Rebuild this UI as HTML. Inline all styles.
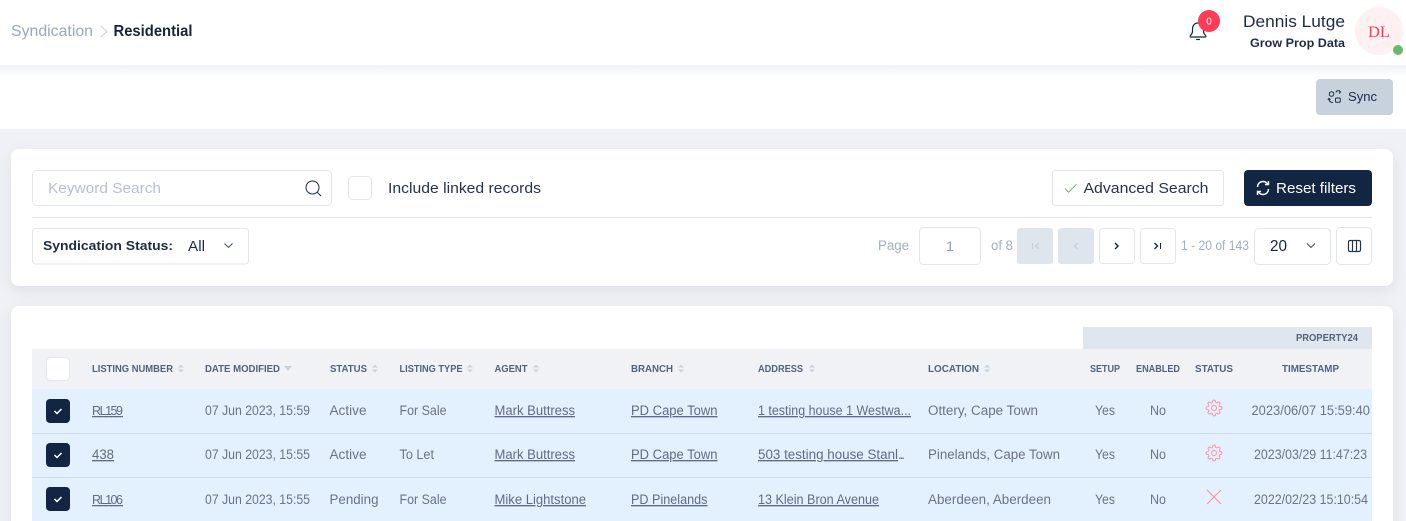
<!DOCTYPE html>
<html lang="en">
<head>
<meta charset="utf-8">
<title>Syndication - Residential</title>
<style>
html,body{margin:0;padding:0;background:#eff1f6;width:1406px;height:521px;overflow:hidden}
svg{display:block}
text{font-family:"Liberation Sans",sans-serif;white-space:pre}
.h{font-size:10.5px;font-weight:700;fill:#52637d}
.r{font-size:13.5px;fill:#6c7389}
.l{font-size:13.5px;fill:#636a87;text-decoration:underline}
.m{font-size:13.5px;fill:#9fb0c8}
.b{fill:#fff;stroke:#e2e7ee;stroke-width:1}
.s{fill:#c9d1db}
</style>
</head>
<body>
<svg width="1406" height="521" viewBox="0 0 1406 521" xmlns="http://www.w3.org/2000/svg">
<defs>
<linearGradient id="hs" x1="0" y1="0" x2="0" y2="1"><stop offset="0" stop-color="#f1f3f7"/><stop offset="1" stop-color="#ffffff"/></linearGradient>
<filter id="cs" x="-5%" y="-20%" width="110%" height="150%"><feDropShadow dx="0" dy="5" stdDeviation="7" flood-color="#12263f" flood-opacity=".07"/></filter>
</defs>

<rect width="1406" height="521" fill="#eff1f6"/>
<rect width="1406" height="129" fill="#fff"/>
<rect y="65" width="1406" height="13" fill="url(#hs)"/>

<!-- breadcrumb -->
<text x="11" y="36" font-size="15.500" fill="#95a9c5" textLength="82" lengthAdjust="spacingAndGlyphs">Syndication</text>
<path d="M100.500 26l6.500 5.500-6.500 5.500" fill="none" stroke="#c9d1db" stroke-width="1.100"/>
<text x="113.500" y="36" font-size="15.500" font-weight="700" fill="#12263f" textLength="79" lengthAdjust="spacingAndGlyphs">Residential</text>

<!-- bell -->
<g fill="none" stroke="#12263f" stroke-width="1.200">
<path d="M1198 23c-3.600 0-5.500 2.700-5.500 6v2.500c0 2-1.200 3-2.200 4.200-.4.600-.1 1.300.6 1.300h14.200c.7 0 1-.7.600-1.300-1-1.200-2.200-2.200-2.200-4.200V29c0-3.300-1.900-6-5.500-6z"/>
<path d="M1196 39.500h4"/>
</g>
<circle cx="1209" cy="21" r="11" fill="#ff3b57"/>
<text x="1209" y="24.500" font-size="10" fill="#fff" text-anchor="middle">0</text>

<text x="1243" y="27" font-size="16.500" fill="#1b2c48" textLength="102" lengthAdjust="spacingAndGlyphs">Dennis Lutge</text>
<text x="1250" y="47" font-size="11.500" font-weight="700" fill="#1b2c48" textLength="95" lengthAdjust="spacingAndGlyphs">Grow Prop Data</text>
<circle cx="1379" cy="31" r="24" fill="#fff0f1"/>
<text x="1368" y="37" font-size="16" fill="#ff3b57" style="font-family:'Liberation Serif',serif" textLength="22" lengthAdjust="spacingAndGlyphs">DL</text>
<circle cx="1398" cy="50" r="5" fill="#66bb6a"/>

<!-- sync -->
<rect x="1316" y="79" width="77" height="36" rx="4" fill="#c8d2dd"/>
<g fill="none" stroke="#1b2c48" stroke-width="1">
<circle cx="1331.500" cy="94" r="2.300"/>
<rect x="1335.500" y="98" width="4.800" height="4.300" rx="1"/>
<path d="M1336 92.500c0-1.100 1-1.800 2-1.800h2M1339 93.500l1.500-1.500-1.500-1.200"/>
<path d="M1333 102.500c-2.500 0-4-1-4-3.800M1327.800 99.800l1.200-1.500 1.500 1.300"/>
</g>
<text x="1348" y="101" font-size="13" fill="#1b2c48" textLength="29" lengthAdjust="spacingAndGlyphs">Sync</text>

<!-- filter card -->
<rect x="11" y="149" width="1382" height="137" rx="8" fill="#fff" filter="url(#cs)"/>
<rect class="b" x="32.500" y="170.500" width="299" height="35" rx="4"/>
<text x="48" y="193" font-size="14.500" fill="#b3c1d6" textLength="113" lengthAdjust="spacingAndGlyphs">Keyword Search</text>
<g fill="none" stroke="#1b2c48" stroke-width="1"><circle cx="312.500" cy="187.500" r="6.500"/><path d="M317.300 192.300l3.700 3.700"/></g>
<rect class="b" x="348.500" y="176.500" width="23" height="23" rx="4"/>
<text x="388" y="193" font-size="15" fill="#24344f" textLength="153" lengthAdjust="spacingAndGlyphs">Include linked records</text>

<rect class="b" x="1052.500" y="170.500" width="171" height="35" rx="3"/>
<path d="M1065 188.500l3.700 3.700 7.800-8" fill="none" stroke="#66bb6a" stroke-width="1"/>
<text x="1083.500" y="193" font-size="15" fill="#24344f" textLength="125" lengthAdjust="spacingAndGlyphs">Advanced Search</text>
<rect x="1244" y="170" width="128" height="36" rx="4" fill="#122644"/>
<g fill="none" stroke="#fff" stroke-width="1.400">
<path d="M1257.500 187c0-3.200 2.500-5.500 5.500-5.500 1.900 0 3.400.8 4.500 2.300"/>
<path d="M1268.500 189c0 3.200-2.500 5.500-5.500 5.500-1.900 0-3.400-.8-4.500-2.300"/>
<path d="M1268.500 181v3.500h-3.500M1257.500 195v-3.500h3.500"/>
</g>
<text x="1276" y="193" font-size="15" fill="#fff" textLength="80" lengthAdjust="spacingAndGlyphs">Reset filters</text>

<rect x="32" y="217" width="1340" height="1" fill="#e4e8ee"/>

<rect class="b" x="32.500" y="228.500" width="216" height="35.500" rx="3"/>
<text x="43" y="250" font-size="13" font-weight="700" fill="#1b2c48" textLength="130" lengthAdjust="spacingAndGlyphs">Syndication Status:</text>
<text x="188" y="251" font-size="14.500" fill="#1b2c48" textLength="17" lengthAdjust="spacingAndGlyphs">All</text>
<path d="M224.500 243.500l4 4 4-4" fill="none" stroke="#33445f" stroke-width=".9"/>

<text class="m" x="878" y="250" textLength="31" lengthAdjust="spacingAndGlyphs">Page</text>
<rect class="b" x="919.500" y="227.500" width="61" height="37" rx="4"/>
<text x="950" y="251" font-size="14" fill="#8a9bb3" text-anchor="middle">1</text>
<text class="m" x="991" y="250" textLength="22" lengthAdjust="spacingAndGlyphs">of 8</text>
<rect x="1017" y="228" width="36" height="36" rx="3" fill="#dfe5ec"/>
<rect x="1058" y="228" width="36" height="36" rx="3" fill="#dfe5ec"/>
<path d="M1032.500 243v6M1038.500 243l-3 3 3 3" fill="none" stroke="#c4cedb" stroke-width="1"/>
<path d="M1077.500 243l-3 3 3 3" fill="none" stroke="#c4cedb" stroke-width="1"/>
<rect class="b" x="1099.500" y="228.500" width="35" height="35" rx="3"/>
<rect class="b" x="1140.500" y="228.500" width="35" height="35" rx="3"/>
<path d="M1115 243l3 3-3 3" fill="none" stroke="#12263f" stroke-width="1.400"/>
<path d="M1154.500 243l3 3-3 3" fill="none" stroke="#12263f" stroke-width="1.300"/><path d="M1160.500 243v6" stroke="#12263f" stroke-width="1"/>
<text class="m" x="1181" y="250" textLength="68" lengthAdjust="spacingAndGlyphs">1 - 20 of 143</text>
<rect class="b" x="1254.500" y="228.500" width="76" height="36" rx="4"/>
<text x="1270" y="251" font-size="15.500" fill="#12263f" textLength="17" lengthAdjust="spacingAndGlyphs">20</text>
<path d="M1307 243.500l4 4 4-4" fill="none" stroke="#33445f" stroke-width=".9"/>
<rect class="b" x="1336.500" y="227.500" width="35" height="37" rx="4"/>
<g fill="none" stroke="#24344f" stroke-width="1.200"><rect x="1348.500" y="240.500" width="12" height="11" rx="1.500"/><path d="M1352.500 240.500v11M1356.500 240.500v11"/></g>

<!-- table card -->
<rect x="11" y="306" width="1382" height="240" rx="8" fill="#fff" filter="url(#cs)"/>
<rect x="1083" y="327" width="289" height="22" fill="#e0e6ed"/>
<text class="h" x="1296" y="341" textLength="62" lengthAdjust="spacingAndGlyphs">PROPERTY24</text>
<rect x="32" y="349" width="1340" height="40" fill="#f0f2f6"/>
<rect x="32" y="389" width="1340" height="132" fill="#e3f0fd"/>
<rect x="32" y="433" width="1340" height="1" fill="#cddcea"/>
<rect x="32" y="477" width="1340" height="1" fill="#cddcea"/>

<!-- head -->
<rect x="46.500" y="357.500" width="23" height="23" rx="4" fill="#fff" stroke="#e2e7ee"/>
<text class="h" x="92" y="372" textLength="81" lengthAdjust="spacingAndGlyphs">LISTING NUMBER</text>
<text class="h" x="205" y="372" textLength="75" lengthAdjust="spacingAndGlyphs">DATE MODIFIED</text>
<text class="h" x="330" y="372" textLength="37" lengthAdjust="spacingAndGlyphs">STATUS</text>
<text class="h" x="399.500" y="372" textLength="63" lengthAdjust="spacingAndGlyphs">LISTING TYPE</text>
<text class="h" x="494.500" y="372" textLength="33" lengthAdjust="spacingAndGlyphs">AGENT</text>
<text class="h" x="631" y="372" textLength="42" lengthAdjust="spacingAndGlyphs">BRANCH</text>
<text class="h" x="758" y="372" textLength="45" lengthAdjust="spacingAndGlyphs">ADDRESS</text>
<text class="h" x="928" y="372" textLength="51" lengthAdjust="spacingAndGlyphs">LOCATION</text>
<text class="h" x="1090" y="372" textLength="30" lengthAdjust="spacingAndGlyphs">SETUP</text>
<text class="h" x="1136" y="372" textLength="44" lengthAdjust="spacingAndGlyphs">ENABLED</text>
<text class="h" x="1195" y="372" textLength="38" lengthAdjust="spacingAndGlyphs">STATUS</text>
<text class="h" x="1282" y="372" textLength="57" lengthAdjust="spacingAndGlyphs">TIMESTAMP</text>
<path class="s" d="M178 367.500l3-3 3 3zM178 369.500l3 3 3-3z"/>
<path class="s" d="M284 366h8l-4 5z"/>
<path class="s" d="M372 367.500l3-3 3 3zM372 369.500l3 3 3-3z"/>
<path class="s" d="M467 367.500l3-3 3 3zM467 369.500l3 3 3-3z"/>
<path class="s" d="M533 367.500l3-3 3 3zM533 369.500l3 3 3-3z"/>
<path class="s" d="M678 367.500l3-3 3 3zM678 369.500l3 3 3-3z"/>
<path class="s" d="M809 367.500l3-3 3 3zM809 369.500l3 3 3-3z"/>
<path class="s" d="M984 367.500l3-3 3 3zM984 369.500l3 3 3-3z"/>

<!-- checkboxes -->
<g fill="#122644"><rect x="46" y="399" width="24" height="24" rx="4"/><rect x="46" y="443" width="24" height="24" rx="4"/><rect x="46" y="487" width="24" height="24" rx="4"/></g>
<g fill="none" stroke="#fff" stroke-width="1.500"><path d="M54.500 411l2.500 2.500 4.500-4.500"/><path d="M54.500 455l2.500 2.500 4.500-4.500"/><path d="M54.500 499l2.500 2.500 4.500-4.500"/></g>

<!-- row 1 -->
<text class="l" x="92" y="415" textLength="31" lengthAdjust="spacing" style="font-size:12.500px">RL159</text>
<text class="r" x="205" y="415" textLength="105" lengthAdjust="spacingAndGlyphs">07 Jun 2023, 15:59</text>
<text class="r" x="329.500" y="415" textLength="37" lengthAdjust="spacingAndGlyphs">Active</text>
<text class="r" x="399.500" y="415" textLength="47" lengthAdjust="spacingAndGlyphs">For Sale</text>
<text class="l" x="494.500" y="415" textLength="80.500" lengthAdjust="spacingAndGlyphs">Mark Buttress</text>
<text class="l" x="631" y="415" textLength="86.500" lengthAdjust="spacingAndGlyphs">PD Cape Town</text>
<text class="l" x="758" y="415" textLength="153" lengthAdjust="spacingAndGlyphs">1 testing house 1 Westwa...</text>
<text class="r" x="928" y="415" textLength="110" lengthAdjust="spacingAndGlyphs">Ottery, Cape Town</text>
<text class="r" x="1095" y="415" textLength="20" lengthAdjust="spacingAndGlyphs">Yes</text>
<text class="r" x="1150" y="415" textLength="16" lengthAdjust="spacingAndGlyphs">No</text>
<text class="r" x="1251.500" y="415" textLength="118.500" lengthAdjust="spacingAndGlyphs">2023/06/07 15:59:40</text>

<!-- row 2 -->
<text class="l" x="92" y="459" textLength="22" lengthAdjust="spacingAndGlyphs">438</text>
<text class="r" x="205" y="459" textLength="105" lengthAdjust="spacingAndGlyphs">07 Jun 2023, 15:55</text>
<text class="r" x="329.500" y="459" textLength="37" lengthAdjust="spacingAndGlyphs">Active</text>
<text class="r" x="399.500" y="459" textLength="34.500" lengthAdjust="spacingAndGlyphs">To Let</text>
<text class="l" x="494.500" y="459" textLength="80.500" lengthAdjust="spacingAndGlyphs">Mark Buttress</text>
<text class="l" x="631" y="459" textLength="86.500" lengthAdjust="spacingAndGlyphs">PD Cape Town</text>
<text class="l" x="758" y="459" textLength="140" lengthAdjust="spacingAndGlyphs">503 testing house Stanl</text>
<text class="r" x="898" y="459" textLength="7" lengthAdjust="spacing">...</text>
<text class="r" x="928" y="459" textLength="132" lengthAdjust="spacingAndGlyphs">Pinelands, Cape Town</text>
<text class="r" x="1095" y="459" textLength="20" lengthAdjust="spacingAndGlyphs">Yes</text>
<text class="r" x="1150" y="459" textLength="16" lengthAdjust="spacingAndGlyphs">No</text>
<text class="r" x="1254" y="459" textLength="113" lengthAdjust="spacingAndGlyphs">2023/03/29 11:47:23</text>

<!-- row 3 -->
<text class="l" x="92" y="504" textLength="31" lengthAdjust="spacing" style="font-size:12.500px">RL106</text>
<text class="r" x="205" y="504" textLength="105" lengthAdjust="spacingAndGlyphs">07 Jun 2023, 15:55</text>
<text class="r" x="329.500" y="504" textLength="49" lengthAdjust="spacingAndGlyphs">Pending</text>
<text class="r" x="399.500" y="504" textLength="47" lengthAdjust="spacingAndGlyphs">For Sale</text>
<text class="l" x="494.500" y="504" textLength="91.500" lengthAdjust="spacingAndGlyphs">Mike Lightstone</text>
<text class="l" x="631" y="504" textLength="76.500" lengthAdjust="spacingAndGlyphs">PD Pinelands</text>
<text class="l" x="758" y="504" textLength="121" lengthAdjust="spacingAndGlyphs">13 Klein Bron Avenue</text>
<text class="r" x="928" y="504" textLength="123" lengthAdjust="spacingAndGlyphs">Aberdeen, Aberdeen</text>
<text class="r" x="1095" y="504" textLength="20" lengthAdjust="spacingAndGlyphs">Yes</text>
<text class="r" x="1150" y="504" textLength="16" lengthAdjust="spacingAndGlyphs">No</text>
<text class="r" x="1254" y="504" textLength="114" lengthAdjust="spacingAndGlyphs">2022/02/23 15:10:54</text>

<!-- status icons -->
<g fill="none" stroke="#ff8f9b" stroke-width="1.300">
<g transform="translate(1205.400 399.400) scale(.72)"><circle cx="12" cy="12" r="3.500"/><path d="M19.400 15a1.650 1.650 0 0 0 .33 1.820l.06.06a2 2 0 0 1 0 2.830 2 2 0 0 1-2.830 0l-.06-.06a1.650 1.650 0 0 0-1.820-.33 1.650 1.650 0 0 0-1 1.510V21a2 2 0 0 1-2 2 2 2 0 0 1-2-2v-.09A1.650 1.650 0 0 0 9 19.400a1.650 1.650 0 0 0-1.820.33l-.06.06a2 2 0 0 1-2.830 0 2 2 0 0 1 0-2.830l.06-.06a1.650 1.650 0 0 0 .33-1.820 1.650 1.650 0 0 0-1.510-1H3a2 2 0 0 1-2-2 2 2 0 0 1 2-2h.09A1.650 1.650 0 0 0 4.600 9a1.650 1.650 0 0 0-.33-1.820l-.06-.06a2 2 0 0 1 0-2.830 2 2 0 0 1 2.830 0l.06.06a1.650 1.650 0 0 0 1.820.33H9a1.650 1.650 0 0 0 1-1.510V3a2 2 0 0 1 2-2 2 2 0 0 1 2 2v.09a1.650 1.650 0 0 0 1 1.510 1.650 1.650 0 0 0 1.820-.33l.06-.06a2 2 0 0 1 2.830 0 2 2 0 0 1 0 2.830l-.06.06a1.650 1.650 0 0 0-.33 1.820V9a1.650 1.650 0 0 0 1.510 1H21a2 2 0 0 1 2 2 2 2 0 0 1-2 2h-.09a1.650 1.650 0 0 0-1.510 1z"/></g>
<g transform="translate(1205.400 444.400) scale(.72)"><circle cx="12" cy="12" r="3.500"/><path d="M19.400 15a1.650 1.650 0 0 0 .33 1.820l.06.06a2 2 0 0 1 0 2.830 2 2 0 0 1-2.830 0l-.06-.06a1.650 1.650 0 0 0-1.820-.33 1.650 1.650 0 0 0-1 1.510V21a2 2 0 0 1-2 2 2 2 0 0 1-2-2v-.09A1.650 1.650 0 0 0 9 19.400a1.650 1.650 0 0 0-1.820.33l-.06.06a2 2 0 0 1-2.830 0 2 2 0 0 1 0-2.830l.06-.06a1.650 1.650 0 0 0 .33-1.820 1.650 1.650 0 0 0-1.510-1H3a2 2 0 0 1-2-2 2 2 0 0 1 2-2h.09A1.650 1.650 0 0 0 4.600 9a1.650 1.650 0 0 0-.33-1.820l-.06-.06a2 2 0 0 1 0-2.830 2 2 0 0 1 2.830 0l.06.06a1.650 1.650 0 0 0 1.820.33H9a1.650 1.650 0 0 0 1-1.510V3a2 2 0 0 1 2-2 2 2 0 0 1 2 2v.09a1.650 1.650 0 0 0 1 1.510 1.650 1.650 0 0 0 1.820-.33l.06-.06a2 2 0 0 1 2.830 0 2 2 0 0 1 0 2.830l-.06.06a1.650 1.650 0 0 0-.33 1.820V9a1.650 1.650 0 0 0 1.510 1H21a2 2 0 0 1 2 2 2 2 0 0 1-2 2h-.09a1.650 1.650 0 0 0-1.510 1z"/></g>
<path stroke-width="1" d="M1207 490l14 14M1221 490l-14 14"/>
</g>
</svg>
</body>
</html>
